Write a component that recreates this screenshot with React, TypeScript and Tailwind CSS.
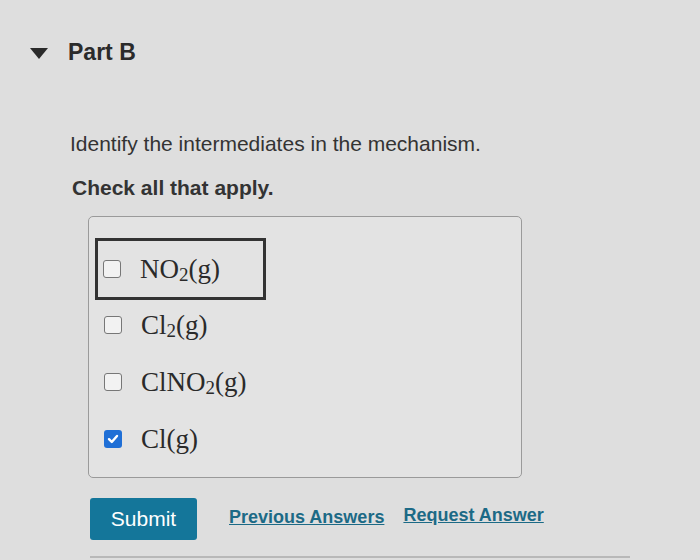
export default function App() {
  const sub = 'text-[19px] align-baseline relative top-[3px]'
  const options = [
    { id: 'no2', label: <>NO<sub className={sub}>2</sub>(g)</>, checked: false, focused: true },
    { id: 'cl2', label: <>Cl<sub className={sub}>2</sub>(g)</>, checked: false },
    { id: 'clno2', label: <>ClNO<sub className={sub}>2</sub>(g)</>, checked: false },
    { id: 'cl', label: <>Cl(g)</>, checked: true },
  ]

  return (
    <div className="w-[700px] h-[560px] overflow-hidden bg-[#dedede] font-['Liberation_Sans',Arial,sans-serif] text-[#2e2e2e]">
      {/* Part header */}
      <div className="flex items-center pt-[38px] pl-[30px]">
        <svg width="18" height="11" viewBox="0 0 18 11" className="mt-[2px]">
          <path d="M0 0 H18 L9 11 Z" fill="#2a2a2a" />
        </svg>
        <h2 className="ml-[20px] text-[23px] font-bold leading-[28px] text-[#2b2b2b]">Part B</h2>
      </div>

      <div className="pl-[70px] pt-[66px]">
        <p className="text-[21px] leading-[24px] text-[#333]">Identify the intermediates in the mechanism.</p>
        <p className="mt-[20px] ml-[2px] text-[21px] font-bold leading-[24px] text-[#333]">Check all that apply.</p>

        {/* Options */}
        <div className="mt-[16px] ml-[18px] w-[434px] h-[262px] rounded-[5px] border border-[#9a9a9a] bg-[#e3e3e3] pt-[21px] pl-[6px]">
          <div className="flex flex-col">
            {options.map(o => (
              <label
                key={o.id}
                className={`flex items-center h-[57px] ${o.focused ? 'w-[171px] h-[62px] border-[3px] border-[#333] mb-[-4px] pl-[5px]' : 'pl-[9px]'}`}
              >
                {o.checked ? (
                  <span className="w-[18px] h-[18px] rounded-[3px] bg-[#1f6fd6] flex items-center justify-center">
                    <svg width="12" height="12" viewBox="0 0 12 12">
                      <path d="M2 6.2 L4.8 9 L10 3" stroke="white" strokeWidth="2.4" fill="none" strokeLinecap="round" strokeLinejoin="round" />
                    </svg>
                  </span>
                ) : (
                  <span className="w-[18px] h-[18px] rounded-[3px] border-[1.5px] border-[#777] bg-[#f2f2f2]" />
                )}
                <span className="ml-[19px] font-['Liberation_Serif','Times_New_Roman',serif] text-[27px] leading-[30px] text-[#2a2a2a]">
                  {o.label}
                </span>
              </label>
            ))}
          </div>
        </div>

        {/* Actions */}
        <div className="flex items-center mt-[20px] ml-[20px]">
          <button className="w-[107px] h-[42px] rounded-[3px] bg-[#14769a] text-white text-[21px] leading-[24px]">
            Submit
          </button>
          <a className="ml-[32px] mt-[-4px] text-[18px] font-bold underline text-[#1c6a86]">Previous Answers</a>
          <a className="ml-[19px] mt-[-8px] text-[18px] font-bold underline text-[#1c6a86]">Request Answer</a>
        </div>

        <div className="mt-[16px] ml-[20px] w-[540px] h-[2px] bg-[#b8b8b8]" />
      </div>
    </div>
  )
}
